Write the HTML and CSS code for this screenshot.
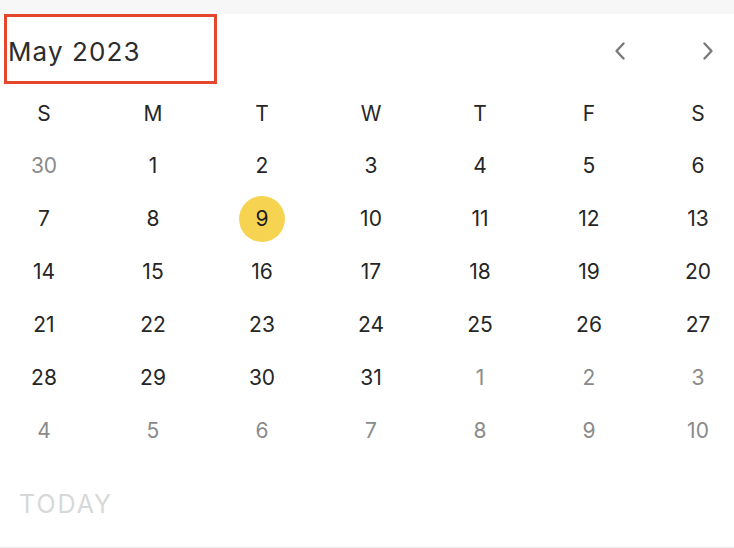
FILE: index.html
```
<!DOCTYPE html>
<html lang="en">
<head>
<meta charset="utf-8">
<title>Calendar</title>
<link rel="stylesheet" href="styles.css">
</head>
<body>
<div class="topbar"></div>
<div class="header">
  <div class="title-box"><span class="title">May 2023</span></div>
  <div class="nav">
    <button class="nav-btn" aria-label="Previous month">
      <svg width="14" height="20" viewBox="0 0 14 20"><path d="M10.5 2.5 L3.5 10 L10.5 17.5" fill="none" stroke="#7a7a7a" stroke-width="2.4" stroke-linecap="round" stroke-linejoin="round"/></svg>
    </button>
    <button class="nav-btn" aria-label="Next month">
      <svg width="14" height="20" viewBox="0 0 14 20"><path d="M3.5 2.5 L10.5 10 L3.5 17.5" fill="none" stroke="#7a7a7a" stroke-width="2.4" stroke-linecap="round" stroke-linejoin="round"/></svg>
    </button>
  </div>
</div>
<div class="grid weekdays">
  <div class="cell">S</div><div class="cell">M</div><div class="cell">T</div><div class="cell">W</div><div class="cell">T</div><div class="cell">F</div><div class="cell">S</div>
</div>
<div class="grid days">
  <div class="cell muted">30</div><div class="cell">1</div><div class="cell">2</div><div class="cell">3</div><div class="cell">4</div><div class="cell">5</div><div class="cell">6</div>
  <div class="cell">7</div><div class="cell">8</div><div class="cell"><span class="selected">9</span></div><div class="cell">10</div><div class="cell">11</div><div class="cell">12</div><div class="cell">13</div>
  <div class="cell">14</div><div class="cell">15</div><div class="cell">16</div><div class="cell">17</div><div class="cell">18</div><div class="cell">19</div><div class="cell">20</div>
  <div class="cell">21</div><div class="cell">22</div><div class="cell">23</div><div class="cell">24</div><div class="cell">25</div><div class="cell">26</div><div class="cell">27</div>
  <div class="cell">28</div><div class="cell">29</div><div class="cell">30</div><div class="cell">31</div><div class="cell muted">1</div><div class="cell muted">2</div><div class="cell muted">3</div>
  <div class="cell muted">4</div><div class="cell muted">5</div><div class="cell muted">6</div><div class="cell muted">7</div><div class="cell muted">8</div><div class="cell muted">9</div><div class="cell muted">10</div>
</div>
<div class="footer"><span class="today">TODAY</span></div>
</body>
</html>
```

FILE: styles.css
```
html, body {
  margin: 0;
  padding: 0;
}
body {
  width: 734px;
  height: 548px;
  overflow: hidden;
  background: #fff;
  font-family: Inter, "Noto Sans", sans-serif;
  color: #262626;
  box-sizing: border-box;
  border-bottom: 1px solid #ececec;
}
.topbar {
  height: 14px;
  background: #f7f7f7;
}
.header {
  display: flex;
  align-items: center;
  justify-content: space-between;
  height: 70px;
}
.title-box {
  margin-left: 4px;
  width: 206px;
  height: 64px;
  border: 3px solid #e5472d;
  display: flex;
  align-items: center;
  padding-left: 1px;
  box-sizing: content-box;
}
.title {
  font-size: 26px;
  letter-spacing: 1.1px;
  color: #2c2c2c;
  padding-top: 4px;
}
.nav {
  display: flex;
  gap: 74px;
  margin-right: 19px;
  margin-top: 3px;
}
.nav-btn {
  border: 0;
  background: none;
  padding: 0;
  width: 14px;
  height: 20px;
  display: flex;
}
.grid {
  display: grid;
  grid-template-columns: repeat(7, 88px);
  column-gap: 21px;
}
.weekdays {
  margin-top: 3px;
  grid-auto-rows: 52px;
}
.days {
  grid-auto-rows: 53px;
}
.cell {
  display: flex;
  align-items: center;
  justify-content: center;
  font-size: 21px;
  color: #262626;
}
.cell.muted {
  color: #8a8a8a;
}
.selected {
  width: 46px;
  height: 46px;
  border-radius: 50%;
  background: #f6d452;
  display: flex;
  align-items: center;
  justify-content: center;
  color: #1e1e1e;
}
.footer {
  padding-top: 32px;
  padding-left: 19px;
}
.today {
  font-size: 25px;
  color: #d8d8d8;
  letter-spacing: 2px;
}
```
